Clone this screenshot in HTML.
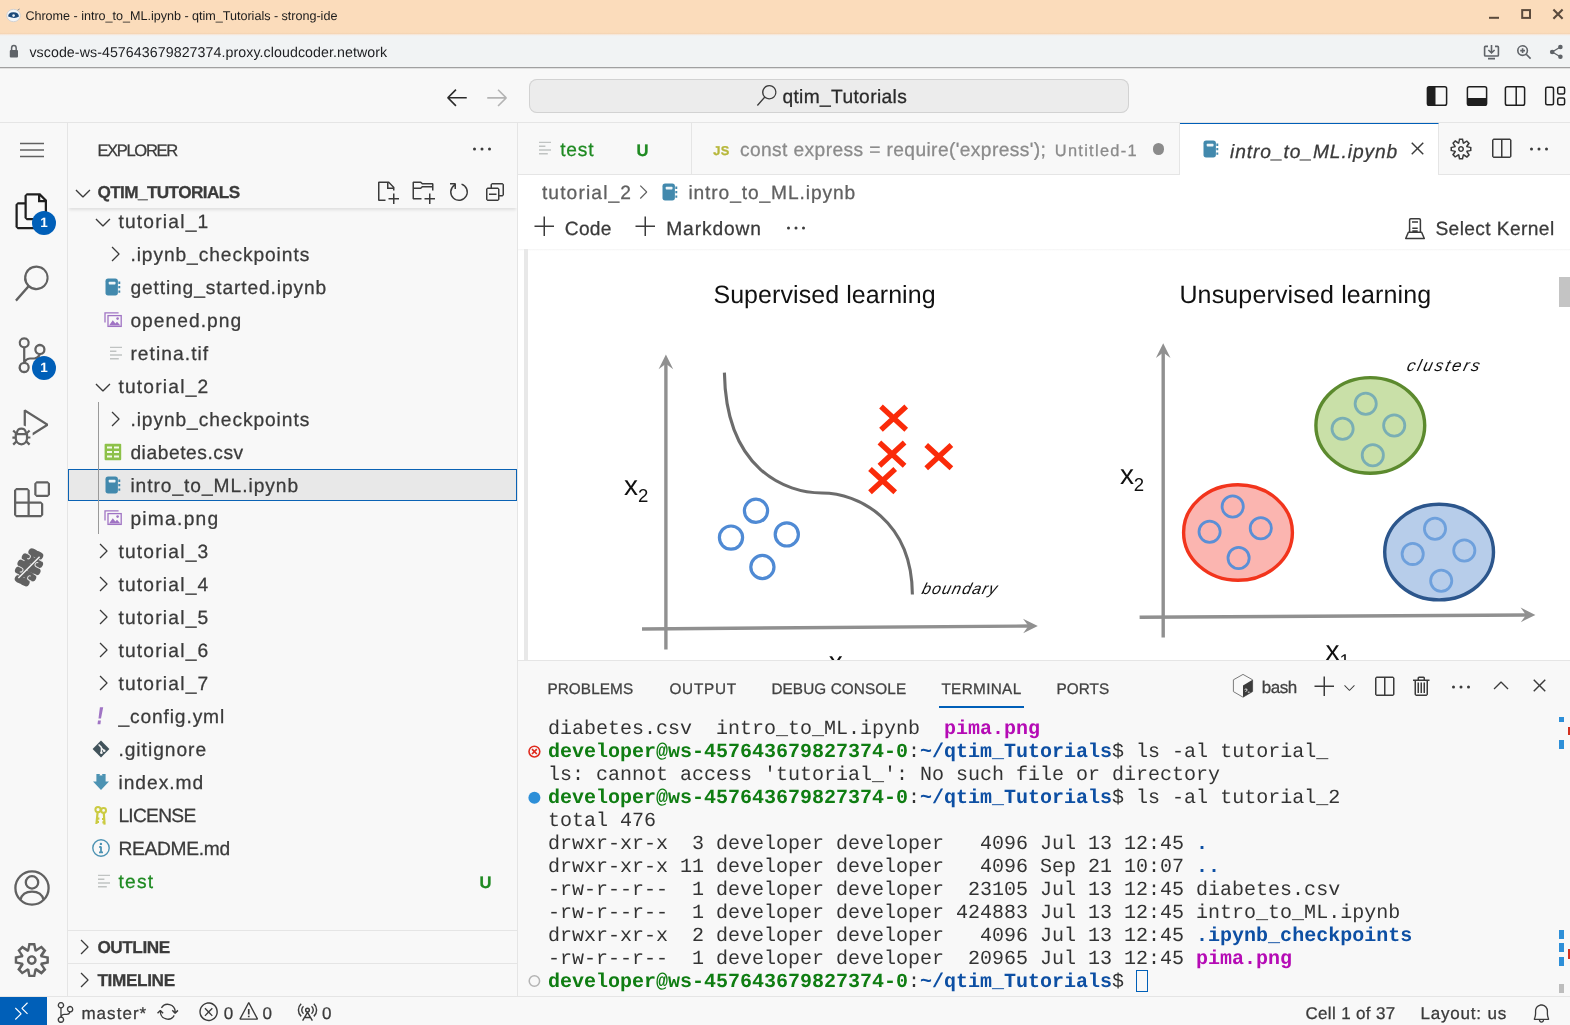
<!DOCTYPE html>
<html lang="en">
<head>
<meta charset="utf-8">
<title>intro_to_ML.ipynb - qtim_Tutorials - strong-ide</title>
<style>
*{box-sizing:border-box;margin:0;padding:0}
html,body{width:1570px;height:1025px;overflow:hidden;background:#f8f8f8;font-family:"Liberation Sans",sans-serif;color:#3b3b3b}
.abs{position:absolute}
svg{display:block;overflow:visible}
.tx{position:absolute;white-space:pre}
body{will-change:transform;text-rendering:geometricPrecision}
#wtitle{left:0;top:0;width:1570px;height:34px;background:linear-gradient(#fbdcbb 0,#fbdcbb 32.4px,#f5d3b0 33.4px,#f7e2cf 34px)}
#urlbar{left:0;top:34px;width:1570px;height:34px;background:linear-gradient(#f7e2cf 0,#f1f3f4 1.8px,#f1f3f4 100%);border-bottom:1px solid #a0a0a0}
#urlline{left:0;top:68px;width:1570px;height:1px;background:#e0e0e0}
#vtitle{left:0;top:69px;width:1570px;height:54px;background:#f8f8f8;border-bottom:1px solid #e5e5e5}
#cmd{left:528.5px;top:9.5px;width:600px;height:34px;background:#ececec;box-shadow:inset 0 0 0 1px #d2d2d2;border-radius:8px}
#act{left:0;top:123px;width:68px;height:873px;background:#f8f8f8;border-right:1px solid #e5e5e5}
#side{left:68px;top:123px;width:450px;height:873px;background:#f8f8f8;border-right:1px solid #e5e5e5;overflow:hidden}
#tabs{left:518px;top:123px;width:1052px;height:52px;background:#f8f8f8;border-bottom:1px solid #e5e5e5}
#crumbs{left:518px;top:175px;width:1052px;height:34px;background:#fff}
#nbtool{left:518px;top:209px;width:1052px;height:40px;background:#fff}
#nb{left:518px;top:249px;width:1052px;height:411px;background:#fff;overflow:hidden}
#panel{left:518px;top:660px;width:1052px;height:336px;background:#f8f8f8;box-shadow:inset 0 1px 0 #e5e5e5;overflow:hidden}
#term{font-family:"Liberation Mono",monospace;font-size:20px;line-height:23px;color:#333;white-space:pre}
#term b.g{color:#0f7d12}
#term b.b{color:#0d4fa3}
#term b.m{color:#b50bb5}
#status{left:0;top:996px;width:1570px;height:29px;background:#f8f8f8;box-shadow:inset 0 1px 0 #e5e5e5;overflow:hidden}
#side .tx,#tabs .tx,#crumbs .tx,#nbtool .tx,#status .tx,#cmd .tx,#panel .tx{-webkit-text-stroke:.28px currentColor}
</style>
</head>
<body>
<div id="wtitle" class="abs">
<svg style="position:absolute;left:6px;top:8px" width="15" height="15" viewBox="0 0 15 15"><ellipse cx="7.5" cy="7.5" rx="6.8" ry="6.2" fill="#f4f6f8" stroke="#c9cdd2" stroke-width=".8"/><path d="M2.2 8.6Q2 4.4 7.2 4.2Q12.6 4 13 8.6Q9 11.4 2.2 8.6Z" fill="#1c4a7a"/><circle cx="7.6" cy="7.6" r="1.3" fill="#e8f0f8"/><path d="M11.5 2.2L13.6 1" stroke="#8a8f96" stroke-width="1"/></svg>
<span class="tx" style="left:25.4px;top:8.2px;font-size:12.6px;line-height:16px;letter-spacing:-0.02px;color:#1b1b1b;">Chrome - intro_to_ML.ipynb - qtim_Tutorials - strong-ide</span>
<svg style="position:absolute;left:1484px;top:4px" width="86" height="26" viewBox="1484 4 86 26" fill="none" stroke="#5a4a3c" stroke-width="2"><path d="M1489 17.8H1499"/><rect x="1522.2" y="10.1" width="7.8" height="7.8"/><path d="M1553.4 9.6L1562.6 18.8M1562.6 9.6L1553.4 18.8" stroke-width="2.1"/></svg>
</div>
<div id="urlbar" class="abs">
<svg style="position:absolute;left:9px;top:10px" width="10" height="15" viewBox="0 0 10 15"><rect x=".8" y="6" width="8.2" height="7.6" rx="1" fill="#5f6368"/><path d="M2.6 6.4V4.2Q2.6 1.6 4.9 1.6Q7.2 1.6 7.2 4.2V6.4" stroke="#5f6368" stroke-width="1.5" fill="none"/></svg>
<span class="tx" style="left:29.4px;top:10.0px;font-size:14.2px;line-height:18px;letter-spacing:0.08px;color:#202124;">vscode-ws-457643679827374.proxy.cloudcoder.network</span>
<svg style="position:absolute;left:1480px;top:9px" width="90" height="18" viewBox="1480 43 90 18" fill="none" stroke="#5f6368" stroke-width="1.6"><path d="M1488 46.4H1485.4Q1484.6 46.4 1484.6 47.2V55.2Q1484.6 56 1485.4 56H1497.6Q1498.4 56 1498.4 55.2V47.2Q1498.4 46.4 1497.6 46.4H1495M1491.5 45V52.6M1488.4 50L1491.5 53L1494.6 50M1488 58.6H1495"/><circle cx="1522.6" cy="50.6" r="4.8"/><path d="M1526.2 54.2L1530.6 58.6M1520.2 50.6H1525M1522.6 48.2V53"/><circle cx="1560.4" cy="47" r="1.5" fill="#5f6368"/><circle cx="1552.2" cy="52" r="1.5" fill="#5f6368"/><circle cx="1560.4" cy="56.8" r="1.5" fill="#5f6368"/><path d="M1560.4 47L1552.2 52L1560.4 56.8" stroke-width="1.3"/></svg>
</div><div id="urlline" class="abs"></div>
<div id="vtitle" class="abs">
<svg style="position:absolute;left:444.0px;top:14.5px;color:#2b2b2b" width="26" height="26" viewBox="0 0 16 16" fill="none"><path d="M7 3.093l-5 5V8.800l5 5 .707-.707-4.146-4.147H14v-1H3.560L7.707 3.800 7 3.093z" fill="currentColor" fill-rule="evenodd"/></svg>
<svg style="position:absolute;left:483.5px;top:14.5px;color:#b4b4b4" width="26" height="26" viewBox="0 0 16 16" fill="none"><path d="M9 13.887l5-5V8.180l-5-5-.707.707 4.146 4.147H2v1h10.440L8.293 13.180l.707.707z" fill="currentColor" fill-rule="evenodd"/></svg>
<div id="cmd" class="abs">
<svg style="position:absolute;left:227.0px;top:6.5px;color:#3b3b3b" width="21" height="21" viewBox="0 0 24 24" fill="none"><path d="M15.250 0a8.250 8.250 0 0 0-6.180 13.720L1 22.880l1.120 1.120 8.050-9.120A8.251 8.251 0 1 0 15.250.010V0zm0 15a6.750 6.750 0 1 1 0-13.500 6.750 6.750 0 0 1 0 13.500z" fill="currentColor" fill-rule="evenodd"/></svg>
<span class="tx" style="left:253.9px;top:6.0px;font-size:19.2px;line-height:25px;letter-spacing:0.35px;color:#2a2a2a;">qtim_Tutorials</span>
</div>
<svg style="position:absolute;left:1425.4px;top:15.0px;color:#1f1f1f" width="24" height="24" viewBox="0 0 16 16" fill="none"><rect x="1.6" y="1.8" width="12.8" height="12.4" rx="1.2" stroke="currentColor" fill="none"/><path d="M1.6 2.4V13.6Q1.6 14.2 2.4 14.2H7V1.8H2.4Q1.6 1.8 1.6 2.4Z" fill="currentColor" /></svg>
<svg style="position:absolute;left:1464.5px;top:15.0px;color:#1f1f1f" width="24" height="24" viewBox="0 0 16 16" fill="none"><rect x="1.6" y="1.8" width="12.8" height="12.4" rx="1.2" stroke="currentColor" fill="none"/><path d="M1.6 9.4H14.4V13.4Q14.4 14.2 13.6 14.2H2.4Q1.6 14.2 1.6 13.4Z" fill="currentColor" /></svg>
<svg style="position:absolute;left:1503.4px;top:15.0px;color:#1f1f1f" width="24" height="24" viewBox="0 0 16 16" fill="none"><rect x="1.6" y="1.8" width="12.8" height="12.4" rx="1.2" stroke="currentColor" fill="none"/><path d="M8.8 1.8V14.2" stroke="currentColor" stroke-width="1.0" fill="none" /></svg>
<svg style="position:absolute;left:1543.0px;top:15.0px;color:#1f1f1f" width="24" height="24" viewBox="0 0 16 16" fill="none"><rect x="1.8" y="2.2" width="5.2" height="11.6" rx="1" stroke="currentColor" fill="none"/><rect x="9.8" y="2.2" width="4.6" height="4.4" rx="1" stroke="currentColor" fill="none"/><rect x="9.8" y="9.4" width="4.6" height="4.4" rx="1" stroke="currentColor" fill="none"/></svg>
</div>
<div id="act" class="abs"><svg style="position:absolute;left:0;top:0" width="67" height="873" viewBox="0 123 67 873" fill="none" stroke-linejoin="round">
<path d="M20 143.5H44M20 150H44M20 156.5H44" stroke="#616161" stroke-width="1.5"/>
<path transform="translate(14 193.2) scale(1.5000)" d="M17.500 0h-9L7 1.500V6H2.500L1 7.500v15.070L2.500 24h12.070L16 22.570V18h4.700l1.300-1.430V4.500L17.500 0zm0 2.120l2.380 2.380H17.500V2.120zm-3 20.380h-12v-15H7v9.070L8.500 18h6v4.500zm6-6h-12v-15H16V6h4.500v10.500z" fill="#1f1f1f" fill-rule="evenodd"/>
<path transform="translate(13.6 265.4) scale(1.5000)" d="M15.250 0a8.250 8.250 0 0 0-6.180 13.720L1 22.880l1.120 1.120 8.050-9.120A8.251 8.251 0 1 0 15.250.010V0zm0 15a6.750 6.750 0 1 1 0-13.500 6.750 6.750 0 0 1 0 13.500z" fill="#616161" fill-rule="evenodd"/>
<path transform="translate(14 337.2) scale(1.5000)" d="M21.007 8.222A3.738 3.738 0 0 0 15.045 5.200a3.737 3.737 0 0 0 1.156 6.583 2.988 2.988 0 0 1-2.668 1.670h-2.990a4.456 4.456 0 0 0-2.989 1.165V7.400a3.737 3.737 0 1 0-1.494 0v9.117a3.776 3.776 0 1 0 1.816.099 2.990 2.990 0 0 1 2.668-1.667h2.990a4.484 4.484 0 0 0 4.223-3.039 3.736 3.736 0 0 0 3.250-3.687zM4.565 3.738a2.242 2.242 0 1 1 4.484 0 2.242 2.242 0 0 1-4.484 0zm4.484 16.441a2.242 2.242 0 1 1-4.484 0 2.242 2.242 0 0 1 4.484 0zm8.221-9.715a2.242 2.242 0 1 1 0-4.485 2.242 2.242 0 0 1 0 4.485z" fill="#616161" fill-rule="evenodd"/>
<path transform="translate(12.4 409.4) scale(1.5000)" d="M10.940 13.500l-1.320 1.320a3.730 3.730 0 0 0-7.240 0L1.060 13.500 0 14.560l1.720 1.720-.22.220V18H0v1.500h1.500v.080c.077.489.214.966.410 1.420L0 22.940 1.060 24l1.650-1.650A4.308 4.308 0 0 0 6 24a4.310 4.310 0 0 0 3.290-1.650L10.940 24 12 22.940 10.090 21c.198-.464.336-.951.410-1.450v-.1H12V18h-1.500v-1.500l-.220-.220L12 14.560l-1.060-1.060zM6 13.500a2.250 2.250 0 0 1 2.250 2.250h-4.500A2.250 2.250 0 0 1 6 13.500zm3 6a3.330 3.330 0 0 1-3 3 3.330 3.330 0 0 1-3-3v-2.250h6v2.250zm14.760-9.900v1.260L13.500 17.370V15.600l8.500-5.370L9 2v9.460a5.070 5.070 0 0 0-1.500-.720V.630L8.640 0l15.120 9.600z" fill="#616161" fill-rule="evenodd"/>
<path transform="translate(14 481.2) scale(1.5000)" d="M13.500 1.500L15 0h7.500L24 1.500V9l-1.500 1.500H15L13.500 9V1.500zm1.500 0V9h7.500V1.500H15zM0 15V6l1.500-1.500H9L10.500 6v7.500H18l1.500 1.500v7.500L18 24H1.500L0 22.500V15zm9-1.500V6H1.500v7.500H9zM9 15H1.500v7.500H9V15zm1.500 7.500H18V15h-7.500v7.500z" fill="#616161" fill-rule="evenodd"/>
<g transform="translate(29 567.3) rotate(27)"><path d="M-1.5 -15H-4.1M-1.5 -7.5H-7.7M-1.5 0H-8.7M-1.5 7.5H-7.7M-1.5 15H-4.1M1.5 -15H4.1M1.5 -7.5H7.7M1.5 0H8.7M1.5 7.5H7.7M1.5 15H4.1" stroke="#616161" stroke-width="7.5" stroke-linecap="round"/><path d="M-9.4 -11.4H-5.6Q-3.4 -11.4 -3.4 -9.2T-5.6 -7M-10.6 -3.8H-7M-9.8 3.8H-6.2Q-4 3.8 -4 6T-6.2 8.2M-9 11.4H-5.4M9.4 11.4H5.6Q3.4 11.4 3.4 9.2T5.6 7M10.6 3.8H7M9.8 -3.8H6.2Q4 -3.8 4 -6T6.2 -8.2M9 -11.4H5.4" stroke="#e2e2e2" stroke-width="1" fill="none"/></g><path d="M39.6 556.7L18.4 577.9" stroke="#f8f8f8" stroke-width="1.4"/>
<circle cx="32" cy="888" r="16.6" stroke="#616161" stroke-width="2.3"/><circle cx="32" cy="882.4" r="6.2" stroke="#616161" stroke-width="2.3"/><path d="M20.6 899.6Q22.4 891.6 32 891.6Q41.6 891.6 43.4 899.6" stroke="#616161" stroke-width="2.3"/>
<path transform="translate(12.3 940.5) scale(2.4375)" d="M9.1 4.4L8.6 2H7.4l-.5 2.4-.7.3-2-1.3-.9.8 1.3 2-.2.7-2.4.5v1.200l2.4.5.3.8-1.3 2 .8.8 2-1.300.8.3.4 2.300h1.200l.5-2.4.8-.3 2 1.300.8-.8-1.300-2 .3-.8 2.300-.4V7.400l-2.400-.5-.3-.8 1.300-2-.8-.8-2 1.300-.7-.2zM9.400 1l.5 2.400L12 2.100l2 2-1.400 2.100 2.400.4v2.800l-2.400.5L14 12l-2 2-2.100-1.400-.5 2.400H6.600l-.5-2.400L4 13.900l-2-2 1.400-2.100L1 9.400V6.600l2.400-.5L2.100 4l2-2 2.100 1.400.4-2.400h2.800zm.6 7c0 1.100-.9 2-2 2s-2-.9-2-2 .9-2 2-2 2 .9 2 2zM8 9c.6 0 1-.4 1-1s-.4-1-1-1-1 .4-1 1 .4 1 1 1z" fill="#616161" fill-rule="evenodd"/>
</svg>
<div style="position:absolute;left:32px;top:88.19999999999999px;width:24px;height:24px;background:#005fb8;border-radius:12px;color:#fff;font-size:13.5px;font-weight:bold;line-height:24px;text-align:center;">1</div>
<div style="position:absolute;left:32px;top:232.60000000000002px;width:24px;height:24px;background:#005fb8;border-radius:12px;color:#fff;font-size:13.5px;font-weight:bold;line-height:24px;text-align:center;">1</div></div>
<div id="side" class="abs"><span class="tx" style="left:29.4px;top:16.6px;font-size:16.6px;line-height:22px;letter-spacing:-1.37px;color:#3b3b3b;">EXPLORER</span>
<svg style="position:absolute;left:402.0px;top:14.0px;color:#3b3b3b" width="24" height="24" viewBox="0 0 16 16" fill="none"><path d="M4 8a1 1 0 1 1-2 0 1 1 0 0 1 2 0zm5 0a1 1 0 1 1-2 0 1 1 0 0 1 2 0zm5 0a1 1 0 1 1-2 0 1 1 0 0 1 2 0z" fill="currentColor" fill-rule="evenodd"/></svg>
<div class="tree" style="position:absolute;left:0;top:85px;width:449px;height:722px;overflow:hidden">
<span class="tx" style="left:50.4px;top:2.4px;font-size:19.2px;line-height:25px;letter-spacing:1.21px;color:#3b3b3b;">tutorial_1</span>
<svg style="position:absolute;left:22.5px;top:1.5px;color:#3b3b3b" width="24" height="24" viewBox="0 0 16 16" fill="none"><path d="M7.976 10.072l4.357-4.357.62.618L8.284 11h-.618L3 6.333l.619-.618 4.357 4.357z" fill="currentColor" fill-rule="evenodd"/></svg>
<span class="tx" style="left:62.4px;top:35.4px;font-size:19.2px;line-height:25px;letter-spacing:0.92px;color:#3b3b3b;">.ipynb_checkpoints</span>
<svg style="position:absolute;left:35.0px;top:34.0px;color:#3b3b3b" width="24" height="24" viewBox="0 0 16 16" fill="none"><path d="M10.072 8.024L5.715 3.667l.618-.62L11 7.716v.618L6.333 13l-.618-.619 4.357-4.357z" fill="currentColor" fill-rule="evenodd"/></svg>
<span class="tx" style="left:62.4px;top:68.4px;font-size:19.2px;line-height:25px;letter-spacing:0.88px;color:#3b3b3b;">getting_started.ipynb</span>
<svg style="position:absolute;left:35.5px;top:70.0px" width="18" height="18" viewBox="0 0 18 18" fill="none"><rect x="1.5" y=".6" width="12.4" height="16.8" rx="2.6" fill="#4289ad"/><rect x="4.7" y="3.8" width="6.8" height="2.7" rx=".7" fill="#eef5f8"/><path d="M15.3 3.6V15.2" stroke="#4289ad" stroke-width="1.9" stroke-dasharray="2.3 2.1"/></svg>
<span class="tx" style="left:62.4px;top:101.4px;font-size:19.2px;line-height:25px;letter-spacing:1.05px;color:#3b3b3b;">opened.png</span>
<svg style="position:absolute;left:35.5px;top:103.0px" width="18" height="18" viewBox="0 0 18 18" fill="none"><path d="M1 11.4V1.8H14.6" stroke="#a074c4" stroke-width="1.3"/><rect x="4" y="4.6" width="13.2" height="10.8" stroke="#a074c4" stroke-width="1.3"/><path d="M5 14.6L8.8 9.2L11.4 12.4L13 10.8L16.4 14.6Z" fill="#a074c4"/><circle cx="13.6" cy="7.6" r="1.3" fill="#a074c4"/></svg>
<span class="tx" style="left:62.4px;top:134.4px;font-size:19.2px;line-height:25px;letter-spacing:1.06px;color:#3b3b3b;">retina.tif</span>
<svg style="position:absolute;left:38.7px;top:136.0px" width="18" height="18" viewBox="0 0 18 18" fill="none"><path d="M3 3.4H15M3 7.2H9.4M3 11H15M3 14.8H11.8" stroke="#c0c3c2" stroke-width="1.4"/></svg>
<span class="tx" style="left:50.4px;top:167.4px;font-size:19.2px;line-height:25px;letter-spacing:1.21px;color:#3b3b3b;">tutorial_2</span>
<svg style="position:absolute;left:22.5px;top:166.5px;color:#3b3b3b" width="24" height="24" viewBox="0 0 16 16" fill="none"><path d="M7.976 10.072l4.357-4.357.62.618L8.284 11h-.618L3 6.333l.619-.618 4.357 4.357z" fill="currentColor" fill-rule="evenodd"/></svg>
<span class="tx" style="left:62.4px;top:200.4px;font-size:19.2px;line-height:25px;letter-spacing:0.92px;color:#3b3b3b;">.ipynb_checkpoints</span>
<svg style="position:absolute;left:35.0px;top:199.0px;color:#3b3b3b" width="24" height="24" viewBox="0 0 16 16" fill="none"><path d="M10.072 8.024L5.715 3.667l.618-.62L11 7.716v.618L6.333 13l-.618-.619 4.357-4.357z" fill="currentColor" fill-rule="evenodd"/></svg>
<span class="tx" style="left:62.4px;top:233.4px;font-size:19.2px;line-height:25px;letter-spacing:0.56px;color:#3b3b3b;">diabetes.csv</span>
<svg style="position:absolute;left:35.5px;top:235.0px" width="18" height="18" viewBox="0 0 18 18" fill="none"><rect x=".6" y=".8" width="16.6" height="16.4" rx="1" fill="#8dc149"/><path d="M3 4.6H8M10 4.6H15M3 9H8M10 9H15M3 13.4H8M10 13.4H15" stroke="#f4faea" stroke-width="2"/></svg>
<div style="position:absolute;left:0px;top:260.5px;width:449px;height:32.5px;background:#e8e8e8;border:1px solid #0a62b4;"></div>
<span class="tx" style="left:62.4px;top:266.4px;font-size:19.2px;line-height:25px;letter-spacing:0.95px;color:#3b3b3b;">intro_to_ML.ipynb</span>
<svg style="position:absolute;left:35.5px;top:268.0px" width="18" height="18" viewBox="0 0 18 18" fill="none"><rect x="1.5" y=".6" width="12.4" height="16.8" rx="2.6" fill="#4289ad"/><rect x="4.7" y="3.8" width="6.8" height="2.7" rx=".7" fill="#eef5f8"/><path d="M15.3 3.6V15.2" stroke="#4289ad" stroke-width="1.9" stroke-dasharray="2.3 2.1"/></svg>
<span class="tx" style="left:62.4px;top:299.4px;font-size:19.2px;line-height:25px;letter-spacing:1.27px;color:#3b3b3b;">pima.png</span>
<svg style="position:absolute;left:35.5px;top:301.0px" width="18" height="18" viewBox="0 0 18 18" fill="none"><path d="M1 11.4V1.8H14.6" stroke="#a074c4" stroke-width="1.3"/><rect x="4" y="4.6" width="13.2" height="10.8" stroke="#a074c4" stroke-width="1.3"/><path d="M5 14.6L8.8 9.2L11.4 12.4L13 10.8L16.4 14.6Z" fill="#a074c4"/><circle cx="13.6" cy="7.6" r="1.3" fill="#a074c4"/></svg>
<span class="tx" style="left:50.4px;top:332.4px;font-size:19.2px;line-height:25px;letter-spacing:1.21px;color:#3b3b3b;">tutorial_3</span>
<svg style="position:absolute;left:23.0px;top:331.0px;color:#3b3b3b" width="24" height="24" viewBox="0 0 16 16" fill="none"><path d="M10.072 8.024L5.715 3.667l.618-.62L11 7.716v.618L6.333 13l-.618-.619 4.357-4.357z" fill="currentColor" fill-rule="evenodd"/></svg>
<span class="tx" style="left:50.4px;top:365.4px;font-size:19.2px;line-height:25px;letter-spacing:1.21px;color:#3b3b3b;">tutorial_4</span>
<svg style="position:absolute;left:23.0px;top:364.0px;color:#3b3b3b" width="24" height="24" viewBox="0 0 16 16" fill="none"><path d="M10.072 8.024L5.715 3.667l.618-.62L11 7.716v.618L6.333 13l-.618-.619 4.357-4.357z" fill="currentColor" fill-rule="evenodd"/></svg>
<span class="tx" style="left:50.4px;top:398.4px;font-size:19.2px;line-height:25px;letter-spacing:1.21px;color:#3b3b3b;">tutorial_5</span>
<svg style="position:absolute;left:23.0px;top:397.0px;color:#3b3b3b" width="24" height="24" viewBox="0 0 16 16" fill="none"><path d="M10.072 8.024L5.715 3.667l.618-.62L11 7.716v.618L6.333 13l-.618-.619 4.357-4.357z" fill="currentColor" fill-rule="evenodd"/></svg>
<span class="tx" style="left:50.4px;top:431.4px;font-size:19.2px;line-height:25px;letter-spacing:1.21px;color:#3b3b3b;">tutorial_6</span>
<svg style="position:absolute;left:23.0px;top:430.0px;color:#3b3b3b" width="24" height="24" viewBox="0 0 16 16" fill="none"><path d="M10.072 8.024L5.715 3.667l.618-.62L11 7.716v.618L6.333 13l-.618-.619 4.357-4.357z" fill="currentColor" fill-rule="evenodd"/></svg>
<span class="tx" style="left:50.4px;top:464.4px;font-size:19.2px;line-height:25px;letter-spacing:1.21px;color:#3b3b3b;">tutorial_7</span>
<svg style="position:absolute;left:23.0px;top:463.0px;color:#3b3b3b" width="24" height="24" viewBox="0 0 16 16" fill="none"><path d="M10.072 8.024L5.715 3.667l.618-.62L11 7.716v.618L6.333 13l-.618-.619 4.357-4.357z" fill="currentColor" fill-rule="evenodd"/></svg>
<span class="tx" style="left:50.4px;top:497.4px;font-size:19.2px;line-height:25px;letter-spacing:0.88px;color:#3b3b3b;">_config.yml</span>
<svg style="position:absolute;left:23.5px;top:499.0px" width="18" height="18" viewBox="0 0 18 18" fill="none"><path d="M11.2 .2L7.9 .2L6.5 11.4H9ZM6 13.6H8.9L8.4 17.2H5.5Z" fill="#a074c4"/></svg>
<span class="tx" style="left:50.4px;top:530.4px;font-size:19.2px;line-height:25px;letter-spacing:0.98px;color:#3b3b3b;">.gitignore</span>
<svg style="position:absolute;left:23.5px;top:532.0px" width="18" height="18" viewBox="0 0 18 18" fill="none"><path d="M9 .6L17.4 9L9 17.4L.6 9Z" fill="#41535b"/><path d="M6.6 4.6L9.4 7.4V12.6M9.4 8L12 10.6" stroke="#f4f4f4" stroke-width="1.4"/><circle cx="9.4" cy="12.8" r="1.3" fill="#f4f4f4"/><circle cx="12.2" cy="10.8" r="1.3" fill="#f4f4f4"/></svg>
<span class="tx" style="left:50.4px;top:563.4px;font-size:19.2px;line-height:25px;letter-spacing:0.99px;color:#3b3b3b;">index.md</span>
<svg style="position:absolute;left:23.5px;top:565.0px" width="18" height="18" viewBox="0 0 18 18" fill="none"><path d="M4.4 1H13.6V8.4H17L9 17L1 8.4H4.4Z" fill="#4d93b3"/><path d="M7.8 1V3L9 2L10.2 3V1Z" fill="#f8f8f8"/></svg>
<span class="tx" style="left:50.4px;top:596.4px;font-size:19.2px;line-height:25px;letter-spacing:-0.72px;color:#3b3b3b;">LICENSE</span>
<svg style="position:absolute;left:23.5px;top:598.0px" width="18" height="18" viewBox="0 0 18 18" fill="none"><circle cx="6" cy="3.6" r="2.6" stroke="#cbcb41" stroke-width="2"/><circle cx="11.6" cy="4.4" r="2.4" stroke="#cbcb41" stroke-width="2"/><path d="M5.6 6.4L4.4 18M4.4 12.6H7.4M4.4 15.8H7M11.8 7L12.6 18.6M12.4 13H10M12.6 16.4H10.4" stroke="#cbcb41" stroke-width="2.2"/></svg>
<span class="tx" style="left:50.4px;top:629.4px;font-size:19.2px;line-height:25px;letter-spacing:-0.28px;color:#3b3b3b;">README.md</span>
<svg style="position:absolute;left:23.5px;top:631.0px" width="18" height="18" viewBox="0 0 18 18" fill="none"><circle cx="9" cy="9" r="8.2" stroke="#4d93b3" stroke-width="1.4"/><path d="M9 7.6V13.2M7.2 8H9M7 13.4H11" stroke="#4d93b3" stroke-width="1.8"/><circle cx="8.9" cy="4.9" r="1.2" fill="#4d93b3"/></svg>
<span class="tx" style="left:50.4px;top:662.4px;font-size:19.2px;line-height:25px;letter-spacing:1.29px;color:#1f8a22;">test</span>
<svg style="position:absolute;left:26.7px;top:664.0px" width="18" height="18" viewBox="0 0 18 18" fill="none"><path d="M3 3.4H15M3 7.2H9.4M3 11H15M3 14.8H11.8" stroke="#c0c3c2" stroke-width="1.4"/></svg>
<span class="tx" style="left:411.4px;top:663.9px;font-size:16.6px;line-height:22px;color:#1f8a22;font-weight:bold;">U</span>
<div style="position:absolute;left:30px;top:194px;width:1px;height:132px;background:#9a9a9a"></div>
</div>
<div style="position:absolute;left:0px;top:52px;width:449px;height:33px;background:#f8f8f8;box-shadow:0 3px 3px -1px rgba(0,0,0,.10);"></div>
<svg style="position:absolute;left:3.0px;top:57.5px;color:#3b3b3b" width="24" height="24" viewBox="0 0 16 16" fill="none"><path d="M7.976 10.072l4.357-4.357.62.618L8.284 11h-.618L3 6.333l.619-.618 4.357 4.357z" fill="currentColor" fill-rule="evenodd"/></svg>
<span class="tx" style="left:29.4px;top:58.3px;font-size:17.2px;line-height:22px;letter-spacing:-0.60px;font-weight:bold;color:#3b3b3b;">QTIM_TUTORIALS</span>
<svg style="position:absolute;left:307.0px;top:56.5px;color:#3b3b3b" width="24" height="24" viewBox="0 0 16 16" fill="none"><path d="M9.5 1.1l3.4 3.5.1.4v2h-1V6H8V2H3v11h4v1H2.5l-.5-.5v-12l.5-.5h6.7l.3.1zM9 2v3h2.9L9 2zm4 14h-1v-3H9v-1h3V9h1v3h3v1h-3v3z" fill="currentColor" fill-rule="evenodd"/></svg>
<svg style="position:absolute;left:343.0px;top:56.5px;color:#3b3b3b" width="24" height="24" viewBox="0 0 16 16" fill="none"><path d="M14.5 2H7.71l-.85-.85L6.51 1h-5l-.5.5v11l.5.5H7v-1H1.99V6h4.49l.35-.15.86-.86H14v1.5l-.001.51h1.011V2.5L14.5 2zm-.51 2h-6.5l-.35.15-.86.86H2v-3h4.29l.85.85.36.15H14l-.01.99zM13 16h-1v-3H9v-1h3V9h1v3h3v1h-3v3z" fill="currentColor" fill-rule="evenodd"/></svg>
<svg style="position:absolute;left:379.0px;top:56.5px;color:#3b3b3b" width="24" height="24" viewBox="0 0 16 16" fill="none"><path d="M4.681 3H2V2h3.5l.5.5V6H5V4a5 5 0 1 0 4.530-.761l.302-.954A6 6 0 1 1 4.681 3z" fill="currentColor" fill-rule="evenodd"/></svg>
<svg style="position:absolute;left:415.0px;top:56.5px;color:#3b3b3b" width="24" height="24" viewBox="0 0 16 16" fill="none"><path d="M9 9H4v1h5V9z M5 3l1-1h7l1 1v7l-1 1h-2v2l-1 1H3l-1-1V6l1-1h2V3zm1 2h4l1 1v4h2V3H6v2zm4 1H3v7h7V6z" fill="currentColor" fill-rule="evenodd"/></svg>
<div style="position:absolute;left:0px;top:807px;width:449px;height:1px;background:#e5e5e5"></div>
<svg style="position:absolute;left:4.0px;top:811.5px;color:#3b3b3b" width="24" height="24" viewBox="0 0 16 16" fill="none"><path d="M10.072 8.024L5.715 3.667l.618-.62L11 7.716v.618L6.333 13l-.618-.619 4.357-4.357z" fill="currentColor" fill-rule="evenodd"/></svg>
<span class="tx" style="left:29.4px;top:813.3px;font-size:17.2px;line-height:22px;letter-spacing:-0.44px;font-weight:bold;color:#3b3b3b;">OUTLINE</span>
<div style="position:absolute;left:0px;top:840px;width:449px;height:1px;background:#e5e5e5"></div>
<svg style="position:absolute;left:4.0px;top:844.5px;color:#3b3b3b" width="24" height="24" viewBox="0 0 16 16" fill="none"><path d="M10.072 8.024L5.715 3.667l.618-.62L11 7.716v.618L6.333 13l-.618-.619 4.357-4.357z" fill="currentColor" fill-rule="evenodd"/></svg>
<span class="tx" style="left:29.4px;top:846.3px;font-size:17.2px;line-height:22px;letter-spacing:-0.35px;font-weight:bold;color:#3b3b3b;">TIMELINE</span></div>
<div id="tabs" class="abs">
<div class="tab" style="position:absolute;left:0px;top:0px;width:173.5px;height:52px;border-right:1px solid #e5e5e5;"><svg style="position:absolute;left:17.9px;top:16.4px" width="18" height="18" viewBox="0 0 18 18" fill="none"><path d="M3 3.4H15M3 7.2H9.4M3 11H15M3 14.8H11.8" stroke="#c0c3c2" stroke-width="1.4"/></svg><span class="tx" style="left:42.2px;top:14.9px;font-size:19.2px;line-height:25px;letter-spacing:0.82px;color:#1f8a22;">test</span><span class="tx" style="left:118.4px;top:16.9px;font-size:16.6px;line-height:22px;color:#1f8a22;font-weight:bold;">U</span></div>
<div class="tab" style="position:absolute;left:173.5px;top:0px;width:488.5px;height:52px;border-right:1px solid #e5e5e5;"><span class="tx" style="left:21.7px;top:19.4px;font-size:12.8px;line-height:17px;letter-spacing:0.34px;color:#b7b73b;font-weight:bold;">JS</span><span class="tx" style="left:48.5px;top:14.9px;font-size:19.2px;line-height:25px;letter-spacing:0.39px;color:#8b8b8b;">const express = require('express');</span><span class="tx" style="left:363.3px;top:17.9px;font-size:16.4px;line-height:21px;letter-spacing:1.29px;color:#8b8b8b;">Untitled-1</span><div style="position:absolute;left:461.29999999999995px;top:20.19999999999999px;width:11.6px;height:11.6px;border-radius:6px;background:#8b8b8b;"></div></div>
<div class="tab active" style="position:absolute;left:662px;top:0px;width:258.6px;height:53px;background:#fff;border-top:1px solid #005fb8;border-right:1px solid #e5e5e5;"><svg style="position:absolute;left:21.7px;top:16.4px" width="18" height="18" viewBox="0 0 18 18" fill="none"><rect x="1.5" y=".6" width="12.4" height="16.8" rx="2.6" fill="#4289ad"/><rect x="4.7" y="3.8" width="6.8" height="2.7" rx=".7" fill="#eef5f8"/><path d="M15.3 3.6V15.2" stroke="#4289ad" stroke-width="1.9" stroke-dasharray="2.3 2.1"/></svg><span class="tx" style="left:50.0px;top:15.5px;font-size:19.2px;line-height:25px;letter-spacing:0.92px;color:#3b3b3b;font-style:italic;">intro_to_ML.ipynb</span><svg style="position:absolute;left:226.0px;top:13.2px;color:#3b3b3b" width="23" height="23" viewBox="0 0 16 16" fill="none"><path d="M8 8.707l3.646 3.647.708-.707L8.707 8l3.647-3.646-.707-.708L8 7.293 4.354 3.646l-.707.708L7.293 8l-3.646 3.646.707.708L8 8.707z" fill="currentColor" fill-rule="evenodd"/></svg></div>
<svg style="position:absolute;left:931.4px;top:13.5px;color:#3b3b3b" width="24" height="24" viewBox="0 0 16 16" fill="none"><path d="M9.1 4.4L8.6 2H7.4l-.5 2.4-.7.3-2-1.3-.9.8 1.3 2-.2.7-2.4.5v1.200l2.4.5.3.8-1.3 2 .8.8 2-1.300.8.3.4 2.300h1.200l.5-2.4.8-.3 2 1.300.8-.8-1.300-2 .3-.8 2.300-.4V7.400l-2.400-.5-.3-.8 1.300-2-.8-.8-2 1.300-.7-.2zM9.400 1l.5 2.400L12 2.100l2 2-1.400 2.100 2.400.4v2.800l-2.400.5L14 12l-2 2-2.100-1.400-.5 2.400H6.600l-.5-2.400L4 13.900l-2-2 1.400-2.100L1 9.400V6.600l2.400-.5L2.100 4l2-2 2.100 1.400.4-2.400h2.800zm.6 7c0 1.100-.9 2-2 2s-2-.9-2-2 .9-2 2-2 2 .9 2 2zM8 9c.6 0 1-.4 1-1s-.4-1-1-1-1 .4-1 1 .4 1 1 1z" fill="currentColor" fill-rule="evenodd"/></svg>
<svg style="position:absolute;left:971.2px;top:14.0px;color:#3b3b3b" width="24" height="24" viewBox="0 0 16 16" fill="none"><path d="M14 1H3L2 2v11l1 1h11l1-1V2l-1-1zM8 13H3V2h5v11zm6 0H9V2h5v11z" fill="currentColor" fill-rule="evenodd"/></svg>
<svg style="position:absolute;left:1009.0px;top:14.0px;color:#3b3b3b" width="24" height="24" viewBox="0 0 16 16" fill="none"><path d="M4 8a1 1 0 1 1-2 0 1 1 0 0 1 2 0zm5 0a1 1 0 1 1-2 0 1 1 0 0 1 2 0zm5 0a1 1 0 1 1-2 0 1 1 0 0 1 2 0z" fill="currentColor" fill-rule="evenodd"/></svg>
</div>
<div id="crumbs" class="abs">
<span class="tx" style="left:23.9px;top:6.3px;font-size:19.2px;line-height:25px;letter-spacing:1.13px;color:#616161;">tutorial_2</span>
<svg style="position:absolute;left:114.4px;top:6.4px;color:#616161" width="22" height="22" viewBox="0 0 16 16" fill="none"><path d="M10.072 8.024L5.715 3.667l.618-.62L11 7.716v.618L6.333 13l-.618-.619 4.357-4.357z" fill="currentColor" fill-rule="evenodd"/></svg>
<svg style="position:absolute;left:142.6px;top:7.8px" width="18" height="18" viewBox="0 0 18 18" fill="none"><rect x="1.5" y=".6" width="12.4" height="16.8" rx="2.6" fill="#4289ad"/><rect x="4.7" y="3.8" width="6.8" height="2.7" rx=".7" fill="#eef5f8"/><path d="M15.3 3.6V15.2" stroke="#4289ad" stroke-width="1.9" stroke-dasharray="2.3 2.1"/></svg>
<span class="tx" style="left:170.4px;top:6.3px;font-size:19.2px;line-height:25px;letter-spacing:0.89px;color:#616161;">intro_to_ML.ipynb</span>
</div>
<div id="nbtool" class="abs">
<svg style="position:absolute;left:14.5px;top:6.4px;color:#3b3b3b" width="24" height="24" viewBox="0 0 16 16" fill="none"><path d="M14 7v1H8v6H7V8H1V7h6V1h1v6h6z" fill="currentColor" fill-rule="evenodd"/></svg>
<span class="tx" style="left:46.8px;top:7.9px;font-size:19.2px;line-height:25px;letter-spacing:0.27px;">Code</span>
<svg style="position:absolute;left:115.5px;top:6.4px;color:#3b3b3b" width="24" height="24" viewBox="0 0 16 16" fill="none"><path d="M14 7v1H8v6H7V8H1V7h6V1h1v6h6z" fill="currentColor" fill-rule="evenodd"/></svg>
<span class="tx" style="left:148.2px;top:7.9px;font-size:19.2px;line-height:25px;letter-spacing:0.90px;">Markdown</span>
<svg style="position:absolute;left:265.8px;top:7.0px;color:#3b3b3b" width="24" height="24" viewBox="0 0 16 16" fill="none"><path d="M4 8a1 1 0 1 1-2 0 1 1 0 0 1 2 0zm5 0a1 1 0 1 1-2 0 1 1 0 0 1 2 0zm5 0a1 1 0 1 1-2 0 1 1 0 0 1 2 0z" fill="currentColor" fill-rule="evenodd"/></svg>
<svg style="position:absolute;left:884.5px;top:7.4px;color:#3b3b3b" width="24" height="24" viewBox="0 0 16 16" fill="none"><path d="M4.4 10.6V2.6Q4.4 1.8 5.2 1.8H10.8Q11.6 1.8 11.6 2.6V10.6M3.6 10.8H12.4L14.2 15H1.8ZM6 4H10M6.2 8.2H9.8M6.2 10H9.8" stroke="currentColor" stroke-width="1.0" fill="none" stroke-linejoin="round"/></svg>
<span class="tx" style="left:917.4px;top:8.3px;font-size:19.2px;line-height:25px;letter-spacing:0.39px;">Select Kernel</span>
</div>
<div id="nb" class="abs">
<div style="position:absolute;left:0px;top:-2px;width:1052px;height:4px;background:linear-gradient(#e9e9e9,#f6f6f6 60%,#fff);"></div>
<div style="position:absolute;left:6px;top:-1px;width:4px;height:412px;background:#e8e8e8;"></div>
<div style="position:absolute;left:1041px;top:28px;width:11px;height:29.5px;background:#c4c4c4;"></div>
<svg style="position:absolute;left:0;top:0" width="1052" height="411" viewBox="518 249 1052 411" fill="none">
<path d="M665.9 649.5V362" stroke="#909090" stroke-width="3.4"/><path d="M665.9 354.4L658.6 369.2L665.9 363.8L673.2 369.2Z" fill="#909090"/>
<path d="M642 629L1030 626" stroke="#909090" stroke-width="3.4"/><path d="M1037.8 626L1023 618.7L1028.4 626L1023.2 633.3Z" fill="#909090"/>
<path d="M724.4 372.6C726 470 786 493 822 493S912 520 912.4 594.6" stroke="#6c6c6c" stroke-width="3.1"/>
<path d="M881.0 406.59999999999997L906.2 429.8M906.2 406.59999999999997L881.0 429.8" stroke="#fa2b0a" stroke-width="5.4"/>
<path d="M879.4 442.59999999999997L904.6 465.8M904.6 442.59999999999997L879.4 465.8" stroke="#fa2b0a" stroke-width="5.4"/>
<path d="M926.1999999999999 445.0L951.4 468.20000000000005M951.4 445.0L926.1999999999999 468.20000000000005" stroke="#fa2b0a" stroke-width="5.4"/>
<path d="M870.0 469.0L895.2 492.20000000000005M895.2 469.0L870.0 492.20000000000005" stroke="#fa2b0a" stroke-width="5.4"/>
<circle cx="756" cy="510.8" r="11.6" stroke="#4f8ad4" stroke-width="3.2"/>
<circle cx="731" cy="537.6" r="11.6" stroke="#4f8ad4" stroke-width="3.2"/>
<circle cx="786.8" cy="534.4" r="11.6" stroke="#4f8ad4" stroke-width="3.2"/>
<circle cx="762.4" cy="567" r="11.6" stroke="#4f8ad4" stroke-width="3.2"/>
<path d="M1163.2 637.6V351" stroke="#909090" stroke-width="3.4"/><path d="M1163.2 343.2L1155.9 358L1163.2 352.6L1170.5 358Z" fill="#909090"/>
<path d="M1139.6 617.2L1527 615" stroke="#909090" stroke-width="3.4"/><path d="M1535.4 614.9L1520.6 607.6L1526 614.9L1520.8 622.2Z" fill="#909090"/>
<ellipse cx="1370.3" cy="425.4" rx="54.4" ry="47.8" fill="#c9e0a8" stroke="#5c8a2e" stroke-width="3.4"/>
<circle cx="1365.7" cy="403.7" r="10.6" stroke="#79aeb4" stroke-width="2.8"/>
<circle cx="1342.6" cy="428.8" r="10.6" stroke="#79aeb4" stroke-width="2.8"/>
<circle cx="1394.2" cy="425.5" r="10.6" stroke="#79aeb4" stroke-width="2.8"/>
<circle cx="1372.8" cy="455.3" r="10.6" stroke="#79aeb4" stroke-width="2.8"/>
<ellipse cx="1238" cy="532.5" rx="54.4" ry="47.8" fill="#fbb5b0" stroke="#f2341c" stroke-width="3.4"/>
<circle cx="1232.7" cy="506.5" r="10.6" stroke="#5a8fd6" stroke-width="2.8"/>
<circle cx="1209.6" cy="531.7" r="10.6" stroke="#5a8fd6" stroke-width="2.8"/>
<circle cx="1260.8" cy="528.3" r="10.6" stroke="#5a8fd6" stroke-width="2.8"/>
<circle cx="1238.6" cy="558" r="10.6" stroke="#5a8fd6" stroke-width="2.8"/>
<ellipse cx="1439.1" cy="552.1" rx="54.4" ry="47.8" fill="#b7cdea" stroke="#2c568c" stroke-width="3.4"/>
<circle cx="1435" cy="528.7" r="10.6" stroke="#6ea0dc" stroke-width="2.8"/>
<circle cx="1412.7" cy="553.9" r="10.6" stroke="#6ea0dc" stroke-width="2.8"/>
<circle cx="1464.3" cy="550.5" r="10.6" stroke="#6ea0dc" stroke-width="2.8"/>
<circle cx="1441.2" cy="580.7" r="10.6" stroke="#6ea0dc" stroke-width="2.8"/>
</svg>
<span class="tx" style="left:195.4px;top:30.1px;font-size:25px;line-height:32px;letter-spacing:0.07px;color:#111;">Supervised learning</span>
<span class="tx" style="left:661.4px;top:30.1px;font-size:25px;line-height:32px;letter-spacing:0.15px;color:#111;">Unsupervised learning</span>
<span class="tx" style="left:106.0px;top:219.0px;font-size:28px;line-height:36px;color:#111;">x</span>
<span class="tx" style="left:119.9px;top:234.9px;font-size:18.6px;line-height:24px;color:#111;">2</span>
<span class="tx" style="left:601.9px;top:208.2px;font-size:28px;line-height:36px;color:#111;">x</span>
<span class="tx" style="left:615.8px;top:224.1px;font-size:18.6px;line-height:24px;color:#111;">2</span>
<span class="tx" style="left:310.8px;top:395.1px;font-size:28px;line-height:36px;color:#111;">x</span>
<span class="tx" style="left:324.7px;top:411.0px;font-size:18.6px;line-height:24px;color:#111;">1</span>
<span class="tx" style="left:807.6px;top:383.7px;font-size:28px;line-height:36px;color:#111;">x</span>
<span class="tx" style="left:821.5px;top:399.6px;font-size:18.6px;line-height:24px;color:#111;">1</span>
<span class="tx" style="left:404.0px;top:330.3px;font-size:16px;line-height:21px;letter-spacing:1.18px;color:#111;font-style:italic;transform:skewX(-14deg);">boundary</span>
<span class="tx" style="left:889.4px;top:107.1px;font-size:16.5px;line-height:21px;letter-spacing:2.24px;color:#111;font-style:italic;transform:skewX(-14deg);">clusters</span>
</div>
<div id="panel" class="abs">
<span class="tx ptab" style="left:29.4px;top:19.8px;font-size:15.3px;line-height:20px;letter-spacing:0.11px;color:#424242;">PROBLEMS</span>
<span class="tx ptab" style="left:151.4px;top:19.8px;font-size:15.3px;line-height:20px;letter-spacing:0.78px;color:#424242;">OUTPUT</span>
<span class="tx ptab" style="left:253.4px;top:19.8px;font-size:15.3px;line-height:20px;letter-spacing:0.11px;color:#424242;">DEBUG CONSOLE</span>
<span class="tx ptab" style="left:423.4px;top:19.8px;font-size:15.3px;line-height:20px;letter-spacing:0.35px;color:#424242;">TERMINAL</span>
<span class="tx ptab" style="left:538.4px;top:19.8px;font-size:15.3px;line-height:20px;letter-spacing:0.09px;color:#424242;">PORTS</span>
<div style="position:absolute;left:420.6px;top:46px;width:85.2px;height:1.5px;background:#005fb8"></div>
<svg style="position:absolute;left:713.4px;top:13.4px" width="24" height="26" viewBox="0 0 24 26" fill="none"><path d="M12 1.4L21.6 6.8V18.6L12 24.2L2.4 18.6V6.8Z" stroke="#7a7a7a" stroke-width="1" stroke-linejoin="round"/><path d="M12 12.6L21.6 6.8V18.6L12 24.2Z" fill="#3b3b3b"/><path d="M13.6 16.6Q15 15.4 16 16.4T14.4 18.6M16.8 19.2H18.6" stroke="#f4f4f4" stroke-width=".9"/></svg>
<span class="tx" style="left:743.7px;top:17.0px;font-size:17px;line-height:22px;letter-spacing:-0.46px;color:#424242;">bash</span>
<svg style="position:absolute;left:795.0px;top:15.0px;color:#3b3b3b" width="24" height="24" viewBox="0 0 16 16" fill="none"><path d="M14 7v1H8v6H7V8H1V7h6V1h1v6h6z" fill="currentColor" fill-rule="evenodd"/></svg>
<svg style="position:absolute;left:822.5px;top:18.7px;color:#3b3b3b" width="17" height="17" viewBox="0 0 16 16" fill="none"><path d="M7.976 10.072l4.357-4.357.62.618L8.284 11h-.618L3 6.333l.619-.618 4.357 4.357z" fill="currentColor" fill-rule="evenodd"/></svg>
<svg style="position:absolute;left:854.3px;top:15.0px;color:#3b3b3b" width="24" height="24" viewBox="0 0 16 16" fill="none"><path d="M14 1H3L2 2v11l1 1h11l1-1V2l-1-1zM8 13H3V2h5v11zm6 0H9V2h5v11z" fill="currentColor" fill-rule="evenodd"/></svg>
<svg style="position:absolute;left:891.8px;top:14.8px;color:#3b3b3b" width="24" height="24" viewBox="0 0 16 16" fill="none"><path d="M10 3h3v1h-1v9l-1 1H4l-1-1V4H2V3h3V2a1 1 0 0 1 1-1h3a1 1 0 0 1 1 1v1zM9 2H6v1h3V2zM4 13h7V4H4v9zm2-8H5v7h1V5zm1 0h1v7H7V5zm2 0h1v7H9V5z" fill="currentColor" fill-rule="evenodd"/></svg>
<svg style="position:absolute;left:931.4px;top:15.4px;color:#3b3b3b" width="24" height="24" viewBox="0 0 16 16" fill="none"><path d="M4 8a1 1 0 1 1-2 0 1 1 0 0 1 2 0zm5 0a1 1 0 1 1-2 0 1 1 0 0 1 2 0zm5 0a1 1 0 1 1-2 0 1 1 0 0 1 2 0z" fill="currentColor" fill-rule="evenodd"/></svg>
<svg style="position:absolute;left:970.6px;top:14.2px;color:#3b3b3b" width="24" height="24" viewBox="0 0 16 16" fill="none"><path d="M8.024 5.928l-4.357 4.357-.62-.618L7.716 5h.618L13 9.667l-.619.618-4.357-4.357z" fill="currentColor" fill-rule="evenodd"/></svg>
<svg style="position:absolute;left:1010.0px;top:14.3px;color:#3b3b3b" width="23" height="23" viewBox="0 0 16 16" fill="none"><path d="M8 8.707l3.646 3.647.708-.707L8.707 8l3.647-3.646-.707-.708L8 7.293 4.354 3.646l-.707.708L7.293 8l-3.646 3.646.707.708L8 8.707z" fill="currentColor" fill-rule="evenodd"/></svg>
<div id="term" class="abs" style="left:30px;top:58.1px">diabetes.csv  intro_to_ML.ipynb  <b class="m">pima.png</b>
<b class="g">developer@ws-457643679827374-0</b>:<b class="b">~/qtim_Tutorials</b>$ ls -al tutorial_
ls: cannot access 'tutorial_': No such file or directory
<b class="g">developer@ws-457643679827374-0</b>:<b class="b">~/qtim_Tutorials</b>$ ls -al tutorial_2
total 476
drwxr-xr-x  3 developer developer   4096 Jul 13 12:45 <b class="b">.</b>
drwxr-xr-x 11 developer developer   4096 Sep 21 10:07 <b class="b">..</b>
-rw-r--r--  1 developer developer  23105 Jul 13 12:45 diabetes.csv
-rw-r--r--  1 developer developer 424883 Jul 13 12:45 intro_to_ML.ipynb
drwxr-xr-x  2 developer developer   4096 Jul 13 12:45 <b class="b">.ipynb_checkpoints</b>
-rw-r--r--  1 developer developer  20965 Jul 13 12:45 <b class="m">pima.png</b>
<b class="g">developer@ws-457643679827374-0</b>:<b class="b">~/qtim_Tutorials</b>$ </div>
<div style="position:absolute;left:618px;top:310.4px;width:12.4px;height:22px;border:1.6px solid #005fb8;"></div>
<svg style="position:absolute;left:8px;top:80px" width="18" height="250" viewBox="526 740 18 250" fill="none"><circle cx="534.4" cy="751.6" r="5.4" stroke="#e02b1f" stroke-width="1.6"/><path d="M532 749.2L536.8 754M536.8 749.2L532 754" stroke="#e02b1f" stroke-width="1.7"/><circle cx="534.4" cy="797.8" r="6" fill="#2d8fd8"/><circle cx="534.4" cy="981" r="5.2" stroke="#b4b4b4" stroke-width="1.5"/></svg>
<div style="position:absolute;left:1041px;top:57px;width:5.2px;height:4.6px;background:#2d8fd8"></div>
<div style="position:absolute;left:1041px;top:80px;width:5.2px;height:8.8px;background:#2d8fd8"></div>
<div style="position:absolute;left:1041px;top:270px;width:5.2px;height:8.8px;background:#2d8fd8"></div>
<div style="position:absolute;left:1041px;top:283px;width:5.2px;height:8.8px;background:#2d8fd8"></div>
<div style="position:absolute;left:1041px;top:297px;width:5.2px;height:8.8px;background:#2d8fd8"></div>
<div style="position:absolute;left:1050px;top:66.79999999999995px;width:2px;height:8px;background:#d3301f"></div>
<div style="position:absolute;left:1050px;top:289.4px;width:2px;height:9.4px;background:#d3301f"></div>
<div style="position:absolute;left:1041px;top:324px;width:5.2px;height:8.8px;background:#bdbdbd"></div>
</div>
<div id="status" class="abs">
<div class="remote" style="position:absolute;left:0px;top:0.5px;width:47px;height:29px;background:#005fb8;"><svg style="position:absolute;left:11.1px;top:4.2px;color:#fff" width="21" height="21" viewBox="0 0 16 16" fill="none"><path d="M12.904 9.570L8.928 5.596l3.976-3.976-.619-.620L8 5.286v.619l4.285 4.285.619-.620zM3 5.620l4.072 4.070L3 13.763l.619.618L8 10v-.619L3.619 5 3 5.620z" fill="currentColor" fill-rule="evenodd"/></svg></div>
<svg style="position:absolute;left:55.3px;top:5.5px;color:#3b3b3b" width="21" height="21" viewBox="0 0 24 24" fill="none"><path d="M21.007 8.222A3.738 3.738 0 0 0 15.045 5.200a3.737 3.737 0 0 0 1.156 6.583 2.988 2.988 0 0 1-2.668 1.670h-2.990a4.456 4.456 0 0 0-2.989 1.165V7.400a3.737 3.737 0 1 0-1.494 0v9.117a3.776 3.776 0 1 0 1.816.099 2.990 2.990 0 0 1 2.668-1.667h2.990a4.484 4.484 0 0 0 4.223-3.039 3.736 3.736 0 0 0 3.250-3.687zM4.565 3.738a2.242 2.242 0 1 1 4.484 0 2.242 2.242 0 0 1-4.484 0zm4.484 16.441a2.242 2.242 0 1 1-4.484 0 2.242 2.242 0 0 1 4.484 0zm8.221-9.715a2.242 2.242 0 1 1 0-4.485 2.242 2.242 0 0 1 0 4.485z" fill="currentColor" fill-rule="evenodd"/></svg>
<span class="tx" style="left:81.4px;top:7.0px;font-size:17px;line-height:22px;letter-spacing:1.04px;color:#3b3b3b;">master*</span>
<svg style="position:absolute;left:156.7px;top:5.2px;color:#3b3b3b" width="21.5" height="21.5" viewBox="0 0 16 16" fill="none"><path d="M2.006 8.267L.780 9.500 0 8.730l2.090-2.070.76.010 2.090 2.120-.760.760-1.167-1.180a5 5 0 0 0 9.400 1.983l.813.597a6 6 0 0 1-11.220-2.683zm10.990-.466L11.760 6.550l-.760.760 2.090 2.110.76.010 2.090-2.070-.750-.760-1.194 1.180a6 6 0 0 0-11.110-2.920l.810.594a5 5 0 0 1 9.300 2.346z" fill="currentColor" fill-rule="evenodd"/></svg>
<svg style="position:absolute;left:198.2px;top:5.2px;color:#3b3b3b" width="21.5" height="21.5" viewBox="0 0 16 16" fill="none"><path d="M8.600 1c1.600.1 3.100.9 4.200 2 1.300 1.400 2 3.100 2 5.100 0 1.600-.6 3.100-1.600 4.400-1 1.200-2.400 2.100-4 2.400-1.600.3-3.200.1-4.600-.7-1.400-.8-2.500-2-3.100-3.500C.900 9.200.800 7.500 1.300 6c.5-1.600 1.400-2.900 2.800-3.800C5.400 1.300 7 .900 8.600 1zm.5 12.900c1.300-.3 2.500-1 3.400-2.100.8-1.100 1.300-2.400 1.200-3.800 0-1.600-.6-3.200-1.700-4.300-1-1-2.200-1.600-3.600-1.700-1.300-.1-2.700.2-3.800 1-1.100.8-1.900 1.900-2.300 3.300-.4 1.300-.4 2.700.2 4 .6 1.300 1.500 2.300 2.700 3 1.200.7 2.600.9 3.900.6zM7.900 7.500L10.300 5l.7.700-2.400 2.500 2.400 2.500-.7.700-2.400-2.500-2.400 2.500-.7-.7 2.400-2.500-2.400-2.500.7-.7 2.400 2.500z" fill="currentColor" fill-rule="evenodd"/></svg>
<span class="tx" style="left:223.7px;top:7.0px;font-size:17px;line-height:22px;color:#3b3b3b;">0</span>
<svg style="position:absolute;left:237.8px;top:4.9px;color:#3b3b3b" width="21.5" height="21.5" viewBox="0 0 16 16" fill="none"><path d="M7.560 1h.880l6.540 12.260-.440.740H1.440L1 13.260 7.560 1zM8 2.280L2.280 13H13.700L8 2.280zM8.625 12v-1h-1.250v1h1.250zm-1.250-2V6h1.250v4h-1.250z" fill="currentColor" fill-rule="evenodd"/></svg>
<span class="tx" style="left:262.6px;top:7.0px;font-size:17px;line-height:22px;color:#3b3b3b;">0</span>
<svg style="position:absolute;left:296.2px;top:3.9px;color:#3b3b3b" width="23" height="23" viewBox="0 0 16 16" fill="none"><path d="M8 8.6L4.6 14.4M8 8.6L11.4 14.4M5.8 12.2H10.2M5.2 9.6A3.4 3.4 0 0 1 5.2 4.4M10.8 4.4A3.4 3.4 0 0 1 10.8 9.6M3.6 11.4A6 6 0 0 1 3.6 2.6M12.4 2.6A6 6 0 0 1 12.4 11.4" stroke="currentColor" stroke-width="1.0" fill="none" /><circle cx="8" cy="7" r="1.3" stroke="currentColor" fill="none"/></svg>
<span class="tx" style="left:322.0px;top:7.0px;font-size:17px;line-height:22px;color:#3b3b3b;">0</span>
<span class="tx" style="left:1305.4px;top:7.0px;font-size:17px;line-height:22px;letter-spacing:0.35px;color:#3b3b3b;">Cell 1 of 37</span>
<span class="tx" style="left:1420.4px;top:7.0px;font-size:17px;line-height:22px;letter-spacing:0.82px;color:#3b3b3b;">Layout: us</span>
<svg style="position:absolute;left:1530.5px;top:6.7px;color:#3b3b3b" width="21" height="21" viewBox="0 0 16 16" fill="none"><path d="M13.377 10.573a7.630 7.630 0 0 1-.383-2.380V6.195a5.115 5.115 0 0 0-1.268-3.446 5.138 5.138 0 0 0-3.242-1.722c-.694-.072-1.400 0-2.070.227-.670.215-1.280.574-1.794 1.053a4.923 4.923 0 0 0-1.208 1.675 5.067 5.067 0 0 0-.431 2.022v2.200a7.610 7.610 0 0 1-.383 2.370L2 12.343l.479.658h3.505c0 .526.215 1.040.586 1.412.37.370.885.586 1.412.586.526 0 1.040-.215 1.411-.586s.587-.886.587-1.412h3.505l.478-.658-.586-1.770zm-4.690 3.147a.997.997 0 0 1-.705.299.997.997 0 0 1-.706-.300.997.997 0 0 1-.300-.705h1.999a.939.939 0 0 1-.287.706zm-5.515-1.710l.371-1.114a8.633 8.633 0 0 0 .443-2.691V6.004c0-.563.120-1.113.347-1.616.227-.514.550-.969.969-1.340.419-.382.910-.670 1.436-.837.538-.18 1.100-.240 1.65-.180a4.147 4.147 0 0 1 2.597 1.400 4.133 4.133 0 0 1 1.004 2.776v2.010c0 .909.144 1.818.443 2.691l.371 1.113h-9.630v-.012z" fill="currentColor" fill-rule="evenodd"/></svg>
</div>
</body>
</html>
